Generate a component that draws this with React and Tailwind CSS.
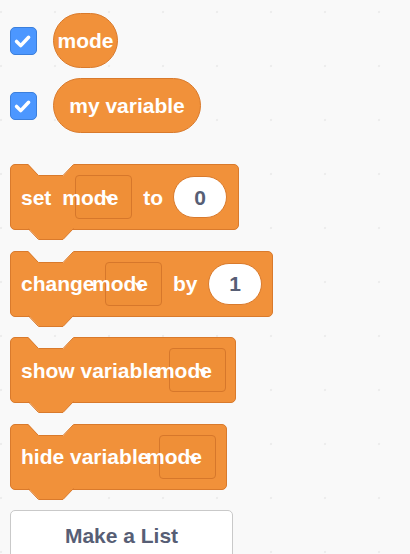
import React from "react";

const ORANGE = "bg-[#f1913a]";

function Checkbox() {
  return (
    <div className="w-[27px] h-[28px] rounded-[5px] bg-[#4c97ff] border border-[#3b7fdc] flex items-center justify-center shrink-0">
      <svg width="27" height="28" viewBox="0 0 27 28">
        <path d="M6 14.5 L10.5 19 L19 10" fill="none" stroke="#fff" strokeWidth="3.8" strokeLinecap="round" strokeLinejoin="round" />
      </svg>
    </div>
  );
}

function Reporter({ children, className = "" }) {
  return (
    <div className={`h-[55px] rounded-full ${ORANGE} border border-[#d97a2c] flex items-center justify-center text-white font-bold text-[21px] leading-none whitespace-nowrap ${className}`}>
      {children}
    </div>
  );
}

function Notch() {
  return (
    <svg className="absolute top-[-1px] left-[17px]" width="46" height="13" viewBox="0 0 46 13">
      <polygon points="0,0 46,0 35.5,11.5 10.5,11.5" fill="#f9f9f9" />
      <path d="M0 0.5 L10.5 11.5 L35 11.5 L45.5 0.5" fill="none" stroke="#d97a2c" strokeWidth="1" strokeLinejoin="round" />
    </svg>
  );
}

function Tab() {
  return (
    <svg className="absolute bottom-[-12px] left-[17px]" width="46" height="13" viewBox="0 0 46 13">
      <polygon points="0,0 46,0 35.5,11 10.5,11" fill="#f1913a" />
      <path d="M0 0.5 L10.5 11.5 L35 11.5 L45.5 0.5" fill="none" stroke="#d97a2c" strokeWidth="1" strokeLinejoin="round" />
    </svg>
  );
}

function Dropdown({ className = "" }) {
  return (
    <div className={`relative w-[57px] h-[44px] shrink-0 rounded-[4px] border border-[#d6772b] bg-[#ef8f37] flex items-center ${className}`}>
      <span className="ml-[-14px] whitespace-nowrap">mode</span>
      <svg className="absolute left-[27px] top-[18px]" width="11" height="11" viewBox="0 0 11 11">
        <polygon points="1,1 10,4 7,10" fill="#fff" />
      </svg>
    </div>
  );
}

function Oval({ children, className = "" }) {
  return (
    <div className={`w-[54px] h-[42px] shrink-0 rounded-full bg-white border border-[#d97a2c] flex items-center justify-center text-[#575e75] ${className}`}>
      {children}
    </div>
  );
}

function Block({ children, className = "" }) {
  return (
    <div className={`relative w-fit h-[66px] rounded-[5px] ${ORANGE} border border-[#d97a2c] flex items-center pl-[10px] text-white font-bold text-[21px] leading-none whitespace-nowrap ${className}`}>
      <Notch />
      <Tab />
      {children}
    </div>
  );
}

export default function App() {
  return (
    <div className="w-full h-[554px] overflow-hidden bg-[#f9f9f9] bg-[radial-gradient(circle,#ededed_1px,transparent_1.6px)] bg-[length:54px_54px] bg-[position:-26px_-15px] font-['Liberation_Sans',Arial,sans-serif]">
      <div className="flex flex-col pt-[13px] pl-[10px]">
        <div className="flex items-center gap-[16px]">
          <Checkbox />
          <Reporter className="w-[65px]">mode</Reporter>
        </div>
        <div className="flex items-center gap-[16px] mt-[10px]">
          <Checkbox />
          <Reporter className="w-[148px]">my variable</Reporter>
        </div>

        <Block className="mt-[31px] pr-[11px]">
          <span>set</span>
          <Dropdown className="ml-[24px]" />
          <span className="ml-[11px]">to</span>
          <Oval className="ml-[10px]">0</Oval>
        </Block>

        <Block className="mt-[20.67px] pr-[10px]">
          <span>change</span>
          <Dropdown className="ml-[10.5px]" />
          <span className="ml-[11px]">by</span>
          <Oval className="ml-[10.5px]">1</Oval>
        </Block>

        <Block className="mt-[20.67px] pr-[9px]">
          <span>show variable</span>
          <Dropdown className="ml-[9px]" />
        </Block>

        <Block className="mt-[20.67px] pr-[10px]">
          <span>hide variable</span>
          <Dropdown className="ml-[9.6px]" />
        </Block>

        <div className="mt-[20px] w-[223px] h-[60px] rounded-[5px] border border-[#c9c9c9] bg-white flex justify-center pt-[13px] text-[#575e75] font-bold text-[21px] leading-[24px]">
          Make a List
        </div>
      </div>
    </div>
  );
}
